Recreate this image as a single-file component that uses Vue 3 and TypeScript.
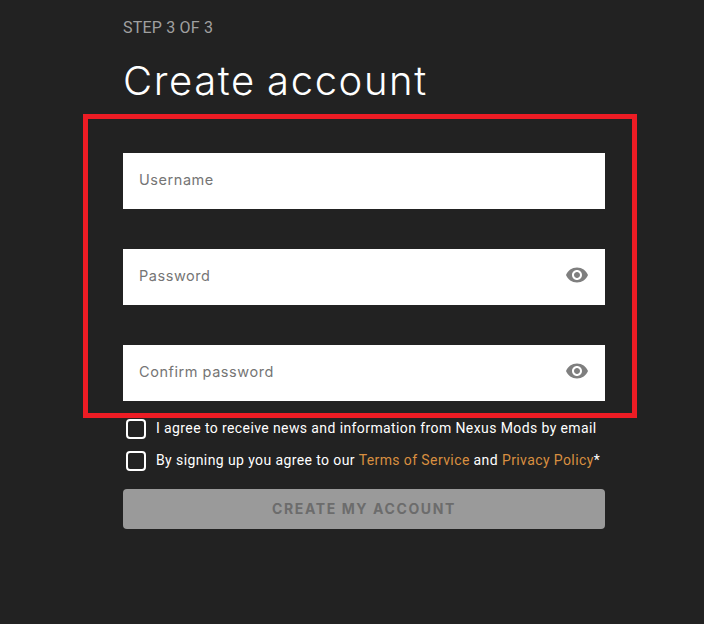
<template>
  <div class="page">
    <div class="column">
      <p class="step">Step 3 of 3</p>
      <h1 class="title">Create account</h1>

      <div class="fields">
        <div v-for="field in fields" :key="field.label" class="field">
          <span class="placeholder">{{ field.label }}</span>
          <svg v-if="field.secret" class="eye" viewBox="0 0 24 24" width="24" height="24">
            <path
              fill="#7f7f7f"
              d="M12 4.5C7 4.5 2.73 7.61 1 12c1.73 4.39 6 7.5 11 7.5s9.27-3.11 11-7.5c-1.73-4.39-6-7.5-11-7.5zM12 17c-2.76 0-5-2.24-5-5s2.24-5 5-5 5 2.24 5 5-2.24 5-5 5zm0-8c-1.66 0-3 1.34-3 3s1.34 3 3 3 3-1.34 3-3-1.34-3-3-3z"
            />
          </svg>
        </div>
      </div>

      <div class="checks">
        <label class="check">
          <span class="box" />
          <span class="check-text">I agree to receive news and information from Nexus Mods by email</span>
        </label>
        <label class="check">
          <span class="box" />
          <span class="check-text">By signing up you agree to our <a class="link">Terms of Service</a> and <a class="link">Privacy Policy</a>*</span>
        </label>
      </div>

      <button type="button" class="submit" disabled>Create my account</button>
    </div>

    <div class="highlight" />
  </div>
</template>

<script setup lang="ts">
interface Field {
  label: string;
  secret: boolean;
}

const fields: Field[] = [
  { label: 'Username', secret: false },
  { label: 'Password', secret: true },
  { label: 'Confirm password', secret: true },
];
</script>

<style>
html,
body {
  margin: 0;
  background: #222222;
}
</style>

<style scoped>
.page {
  position: relative;
  width: 704px;
  height: 624px;
  overflow: hidden;
  background: #222222;
}
.column {
  width: 482px;
  margin-left: 123px;
  padding-top: 18px;
  display: flex;
  flex-direction: column;
}
.step {
  margin: 0;
  font: 400 16px/19px Roboto, sans-serif;
  letter-spacing: 0.2px;
  color: #a0a0a0;
  text-transform: uppercase;
}
.title {
  margin: 14px 0 0;
  font: 300 40px/60px Inter, sans-serif;
  letter-spacing: 1.6px;
  word-spacing: -1.5px;
  color: #ffffff;
}
.fields {
  margin-top: 42px;
  display: flex;
  flex-direction: column;
  gap: 40px;
}
.field {
  height: 56px;
  padding: 0 16px;
  background: #ffffff;
  display: flex;
  align-items: center;
  justify-content: space-between;
}
.placeholder {
  margin-bottom: 2px;
  font: 400 14.5px/18px Inter, sans-serif;
  letter-spacing: 0.55px;
  color: #757575;
}
.eye {
  display: block;
  margin-bottom: 4px;
}
.checks {
  margin-top: 18px;
  display: flex;
  flex-direction: column;
  gap: 12px;
}
.check {
  height: 20px;
  padding-left: 3px;
  display: flex;
  align-items: center;
  gap: 10px;
  font: 400 14px/20px Roboto, sans-serif;
  letter-spacing: 0.4px;
  color: #ffffff;
}
.check-text {
  margin-bottom: 2px;
}
.box {
  box-sizing: border-box;
  width: 20px;
  height: 20px;
  border: 2px solid #ffffff;
  border-radius: 4px;
}
.link {
  color: #d98f40;
}
.submit {
  margin-top: 18px;
  height: 40px;
  padding: 0 0 1px;
  border: none;
  border-radius: 4px;
  background: #9a9a9a;
  color: #6c6c6c;
  font: 700 14px/38px Inter, sans-serif;
  letter-spacing: 1.6px;
  text-transform: uppercase;
}
.highlight {
  position: absolute;
  left: 83px;
  top: 114px;
  width: 554px;
  height: 304px;
  box-sizing: border-box;
  border: 5px solid #ed1c24;
  pointer-events: none;
}
</style>
